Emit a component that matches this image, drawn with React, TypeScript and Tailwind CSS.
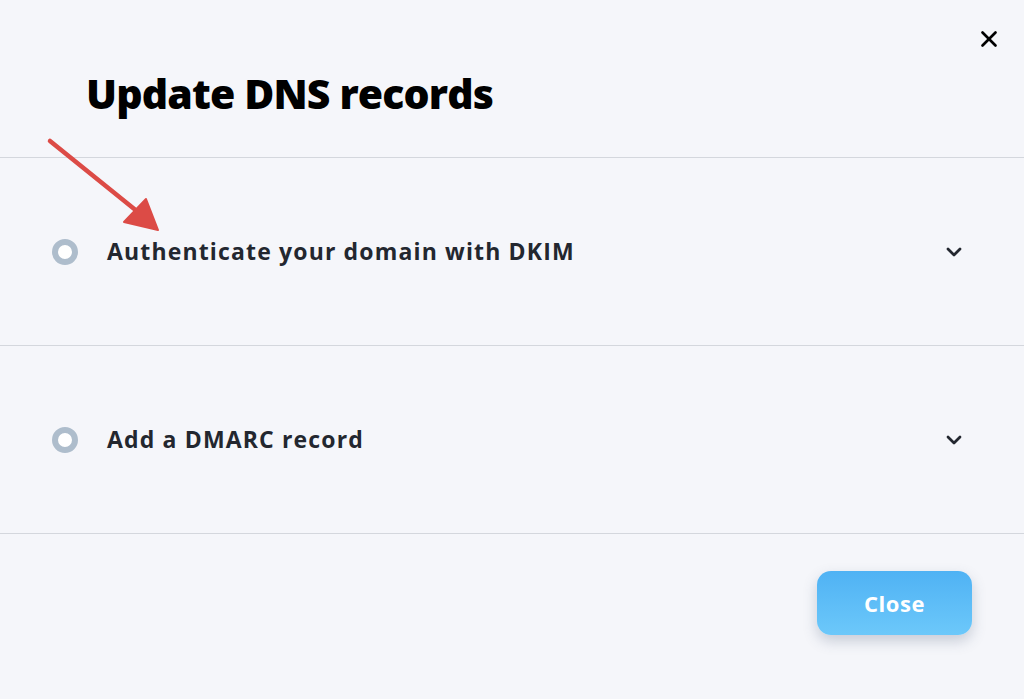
import { X, ChevronDown } from "lucide-react";

const steps = ["Authenticate your domain with DKIM", "Add a DMARC record"];

export default function App() {
    return (
        <div
            className="relative h-[699px] w-[1024px] overflow-hidden bg-[#f5f6fa] text-[#23272f]"
            style={{ fontFamily: '"Open Sans", "Noto Sans", sans-serif' }}
        >
            <button className="absolute right-[22px] top-[26px] text-black">
                <X className="h-[26px] w-[26px]" strokeWidth={2.5} />
            </button>

            <div className="flex h-[157px] items-center pl-[86px] pt-[30px]">
                <h1 className="text-[41px] font-extrabold tracking-[-0.85px] text-black">Update DNS records</h1>
            </div>

            <div className="border-t border-[#d4d7dd]">
                {steps.map((step) => (
                    <div key={step} className="flex h-[188px] items-center border-b border-[#d4d7dd] pl-[52px] pr-[58px]">
                        <span className="h-[26px] w-[26px] flex-shrink-0 rounded-full border-[6px] border-[#aebdcc] bg-white" />
                        <span className="ml-[29px] flex-1 text-[23px] font-bold tracking-[1.15px]">{step}</span>
                        <ChevronDown className="h-[24px] w-[24px] text-[#23272f]" strokeWidth={2.75} />
                    </div>
                ))}
            </div>

            <div className="flex justify-end pr-[52px] pt-[37px]">
                <button className="h-[64px] w-[155px] rounded-[14px] bg-gradient-to-b from-[#4fb2f4] to-[#6cc8fa] text-[22px] font-bold tracking-[0.5px] text-white shadow-[0_6px_14px_rgba(60,80,110,0.25)]">
                    Close
                </button>
            </div>

            <svg className="absolute left-0 top-0" width="200" height="260" viewBox="0 0 200 260">
                <line x1="50" y1="141" x2="138" y2="212" stroke="#dc4b46" strokeWidth="4.5" strokeLinecap="round" />
                <polygon points="158,230 124,222 146,199" fill="#dc4b46" stroke="#dc4b46" strokeWidth="2" strokeLinejoin="round" />
            </svg>
        </div>
    );
}
